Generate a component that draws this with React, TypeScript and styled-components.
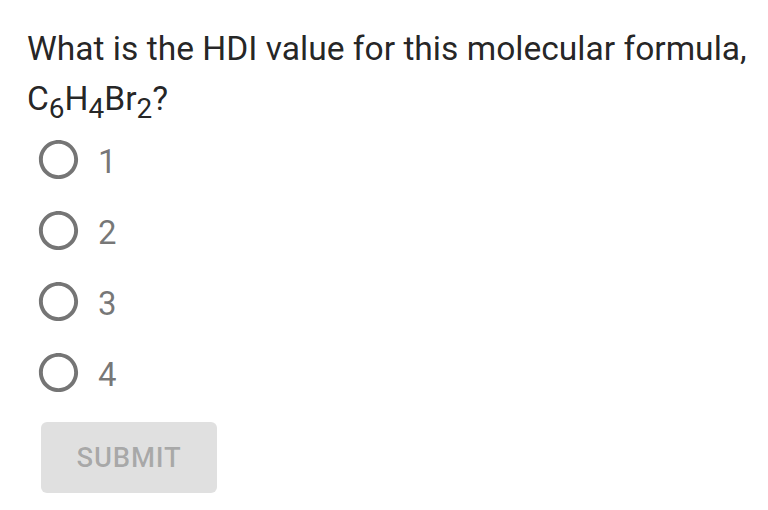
import React from "react";
import styled, { createGlobalStyle } from "styled-components";

const Global = createGlobalStyle`
  html, body { margin: 0; padding: 0; background: #ffffff; }
  body { font-family: Roboto, "Liberation Sans", Arial, sans-serif; }
`;

const Page = styled.div`
  padding: 24px 0 0 27px;
  display: flex;
  flex-direction: column;
  align-items: flex-start;
`;

const Question = styled.p`
  margin: 0;
  font-size: 33.6px;
  line-height: 50px;
  color: rgba(0, 0, 0, 0.87);
  font-weight: 400;
  white-space: nowrap;
  sub {
    line-height: 0;
    font-size: smaller;
  }
`;

const Options = styled.div`
  display: flex;
  flex-direction: column;
  margin-left: -27px;
`;

const OptionRow = styled.label`
  display: flex;
  align-items: center;
  height: 71px;
  padding-left: 35px;
  gap: 16px;
  cursor: pointer;
`;

const OptionText = styled.span`
  font-size: 33px;
  color: rgba(0, 0, 0, 0.54);
  padding-top: 4px;
`;

const SubmitButton = styled.button`
  margin: 14px 0 0 14px;
  width: 176px;
  height: 71px;
  border: none;
  border-radius: 6px;
  background: #e0e0e0;
  color: rgba(0, 0, 0, 0.26);
  font-family: Roboto, "Liberation Sans", Arial, sans-serif;
  font-size: 27.5px;
  font-weight: 500;
  letter-spacing: 0.8px;
  text-transform: uppercase;
  padding: 0;
`;

const RadioIcon: React.FC = () => (
  <svg width="47" height="47" viewBox="0 0 24 24" aria-hidden="true">
    <path
      fill="#757575"
      d="M12 2C6.48 2 2 6.48 2 12s4.48 10 10 10 10-4.48 10-10S17.52 2 12 2zm0 18c-4.42 0-8-3.580-8-8s3.58-8 8-8 8 3.58 8 8-3.58 8-8 8z"
    />
  </svg>
);

const options = ["1", "2", "3", "4"];

export default function App() {
  return (
    <>
      <Global />
      <Page>
        <Question>
          What is the HDI value for this molecular formula,
          <br />
          C<sub>6</sub>H<sub>4</sub>Br<sub>2</sub>?
        </Question>
        <Options>
          {options.map((o) => (
            <OptionRow key={o}>
              <RadioIcon />
              <OptionText>{o}</OptionText>
            </OptionRow>
          ))}
        </Options>
        <SubmitButton disabled>Submit</SubmitButton>
      </Page>
    </>
  );
}
